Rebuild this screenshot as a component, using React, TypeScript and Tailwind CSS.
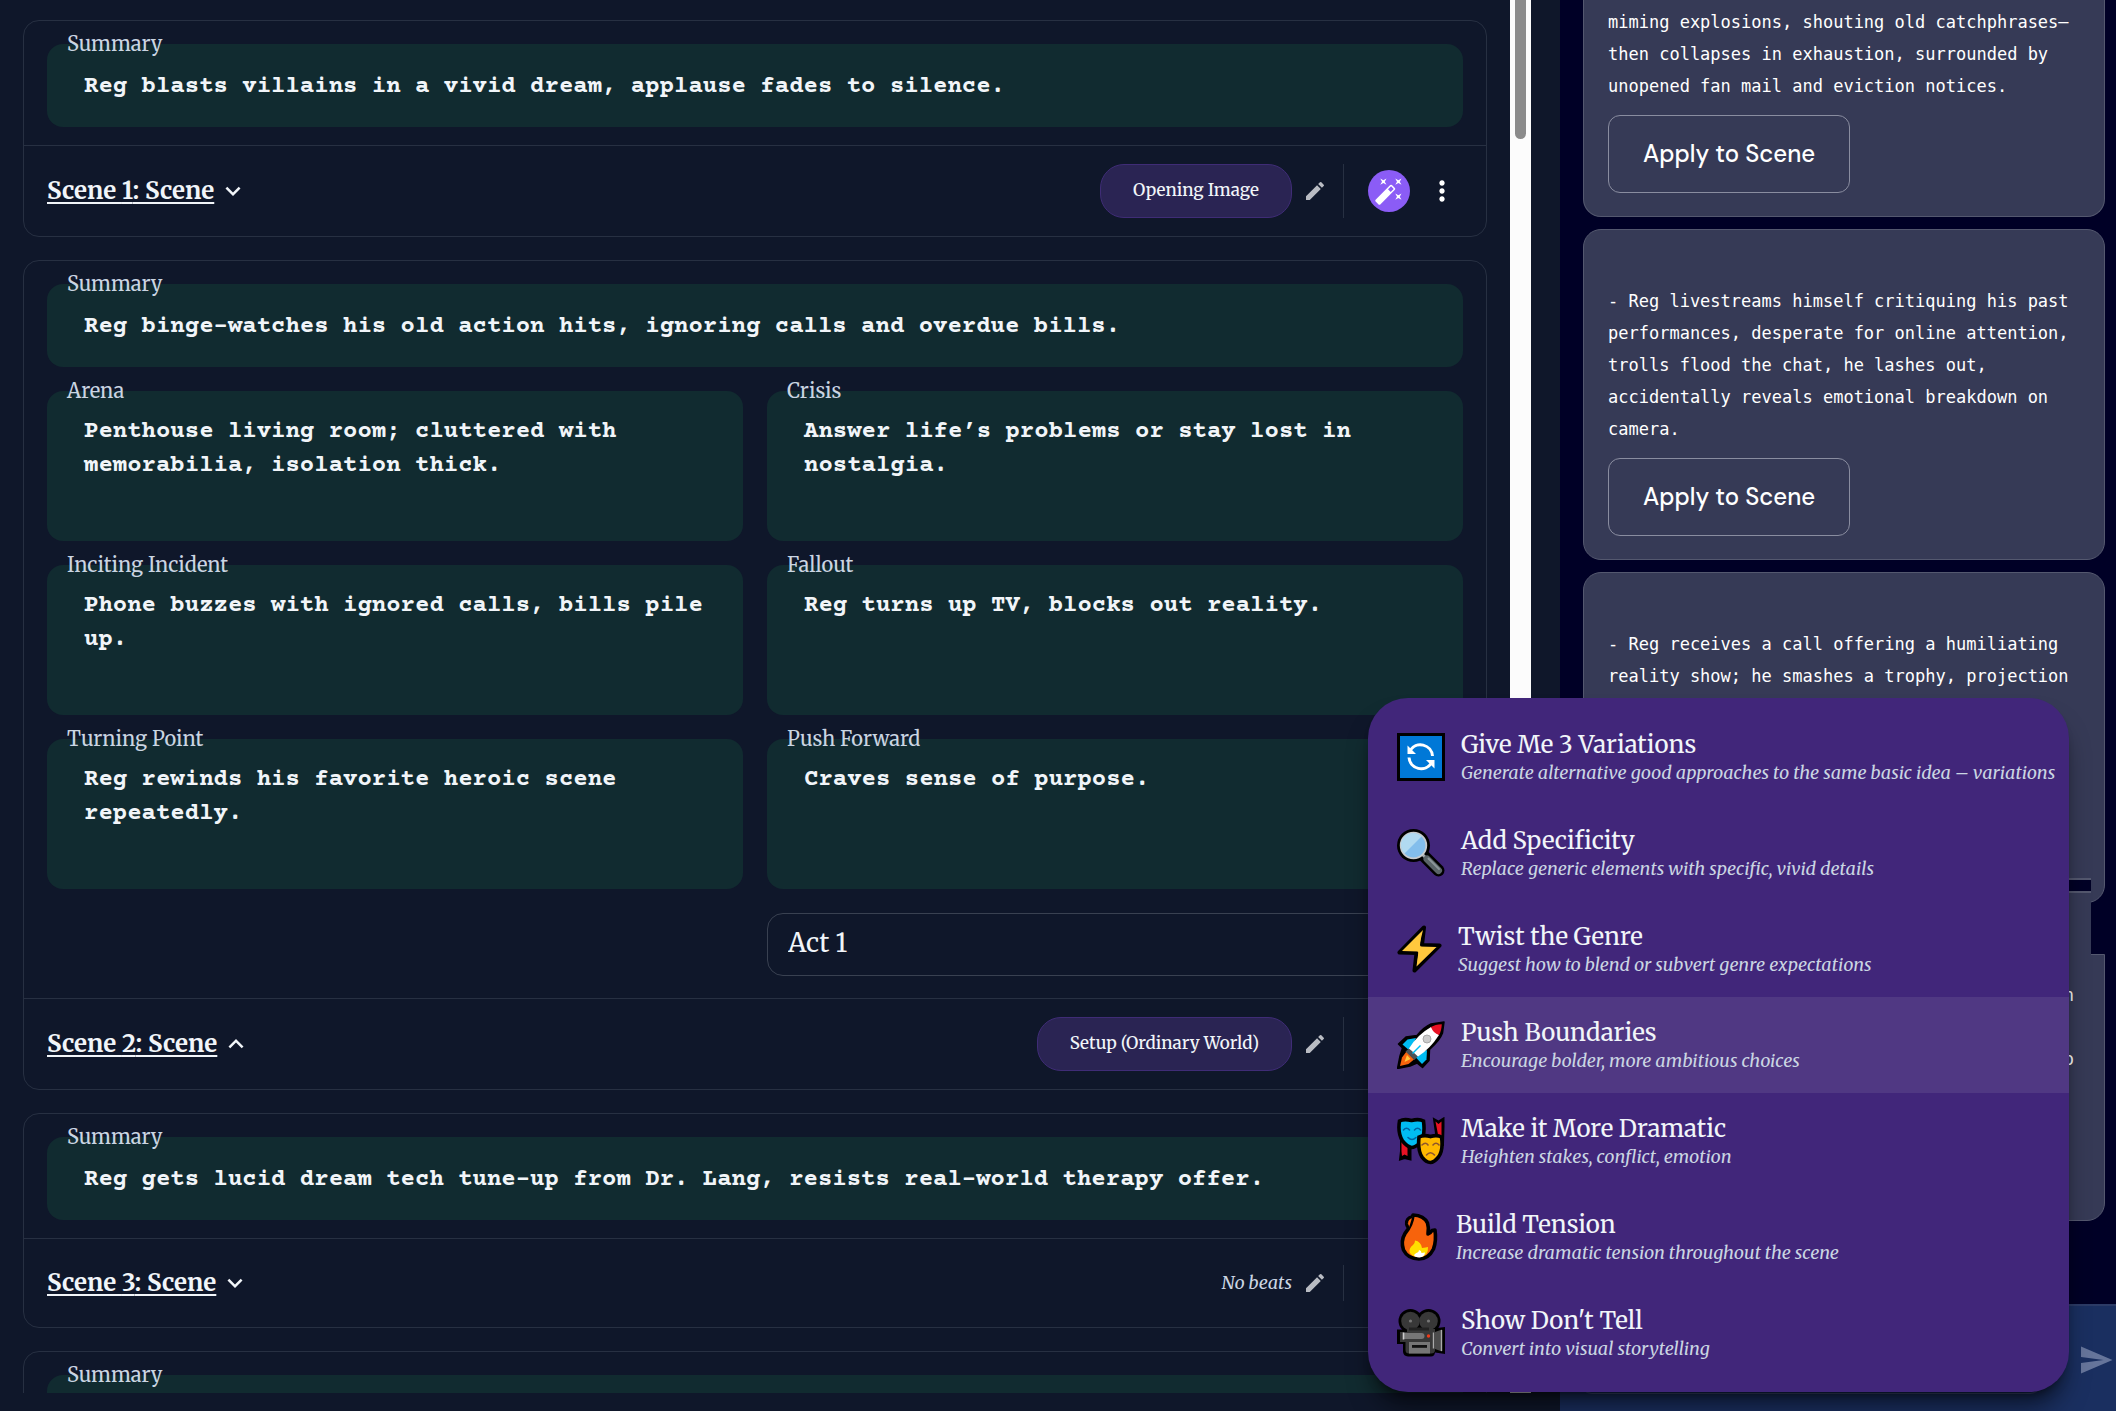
import type { ReactNode } from "react";
import { MdAutoFixHigh, MdEdit, MdExpandLess, MdExpandMore, MdMoreVert, MdSend } from "react-icons/md";

type Field = { label: string; value: string };

type Scene = {
  id: number;
  summary: string;
  beat?: string;
  open?: boolean;
  fields?: Field[];
};

const scenes: Scene[] = [
  {
    id: 1,
    summary: "Reg blasts villains in a vivid dream, applause fades to silence.",
    beat: "Opening Image",
  },
  {
    id: 2,
    summary: "Reg binge-watches his old action hits, ignoring calls and overdue bills.",
    beat: "Setup (Ordinary World)",
    open: true,
    fields: [
      { label: "Arena", value: "Penthouse living room; cluttered with memorabilia, isolation thick." },
      { label: "Crisis", value: "Answer life’s problems or stay lost in nostalgia." },
      { label: "Inciting Incident", value: "Phone buzzes with ignored calls, bills pile up." },
      { label: "Fallout", value: "Reg turns up TV, blocks out reality." },
      { label: "Turning Point", value: "Reg rewinds his favorite heroic scene repeatedly." },
      { label: "Push Forward", value: "Craves sense of purpose." },
    ],
  },
  {
    id: 3,
    summary: "Reg gets lucid dream tech tune-up from Dr. Lang, resists real-world therapy offer.",
  },
];

function RefreshEmoji() {
  return (
    <svg className="h-12 w-12 shrink-0" viewBox="0 0 48 48">
      <rect width="48" height="48" fill="#000" />
      <rect x="3" y="3" width="42" height="42" fill="#0078d7" />
      <g fill="none" stroke="#fff" strokeWidth="3">
        <path d="M13 17.5A12.2 12.2 0 0 1 35.5 23" />
        <path d="M12 24.5A12.2 12.2 0 0 0 34.5 30" />
      </g>
      <path d="M10.5 12.5v8.5h8.5z" fill="#fff" />
      <path d="M37.5 35.5v-8.5h-8.5z" fill="#fff" />
    </svg>
  );
}

function LensEmoji() {
  return (
    <svg className="h-12 w-12 shrink-0" viewBox="0 0 48 48">
      <path d="M25 25L41.5 41.5" stroke="#000" strokeWidth="12" strokeLinecap="round" />
      <circle cx="16.5" cy="16.5" r="16.5" fill="#000" />
      <path d="M25.5 25.5L30 30" stroke="#a6adb1" strokeWidth="3" />
      <path d="M30 30L41.5 41.5" stroke="#5a6468" strokeWidth="7" strokeLinecap="round" />
      <path d="M31.5 29.5L42 40" stroke="#8b9599" strokeWidth="2" strokeLinecap="round" />
      <circle cx="16.5" cy="16.5" r="12.8" fill="#83beec" stroke="#c8ccce" strokeWidth="1.8" />
      <path d="M7.5 24.5A12 12 0 0 1 24.5 7.5z" fill="#b1daf1" />
    </svg>
  );
}

function BoltEmoji() {
  return (
    <svg className="h-12 w-[45px] shrink-0" viewBox="0 0 45 48">
      <path
        d="M27 2.5L2.5 27.5L19.5 28L17.5 45.5L42.5 20.5L25 20z"
        fill="#ffc83d"
        stroke="#000"
        strokeWidth="4"
        strokeLinejoin="round"
      />
      <path d="M26 5L5 26L21.5 26.5L19.5 41.5L39.5 22L22 21.5z" fill="#ffc83d" />
    </svg>
  );
}

function RocketEmoji() {
  return (
    <svg className="h-12 w-12 shrink-0" viewBox="0 0 48 48">
      <path
        d="M47 1L34 3Q27 6 20 14.5L9 16L1.5 23L5.5 27L3 35L0.5 47.5L13 45L20 42L25.5 46.5L32 39.5L32.5 28.5Q43 19 45.5 12z"
        fill="#000"
        stroke="#000"
        strokeWidth="1.5"
        strokeLinejoin="round"
      />
      <path d="M19 17L10.5 18.5L5.5 23.5L13 30z" fill="#00bcf2" />
      <path d="M30 29L29.5 38.5L25 43L17.5 35z" fill="#00bcf2" />
      <path d="M9.5 30.5L5 36.5L3 45L11.5 43L17 38.5z" fill="#f7630c" />
      <path d="M10 34L7.5 41L13.5 38z" fill="#ffc83d" />
      <path d="M12 27.5L8.5 30.5L17.5 39L21 35z" fill="#4a5257" />
      <path d="M12 27.5Q20 14 34 6L42 14Q33 28 21 35.5z" fill="#fff" />
      <path d="M34 6Q38 3.5 44.8 3.2Q44.5 10 42 14Q36 12 34 6z" fill="#e81224" />
      <circle cx="30" cy="18" r="4" fill="#ccc" stroke="#a8a8a8" strokeWidth="1" />
      <path d="M15.5 32.5L23.5 24.5" stroke="#00bcf2" strokeWidth="1.5" />
    </svg>
  );
}

function MasksEmoji() {
  return (
    <svg className="h-12 w-12 shrink-0" viewBox="0 0 48 48">
      <path
        d="M37 2l4.5 2.5 5-3v8l-.5 18-6-4zM4 18v16l-1 8.5 4.500-1.500 6 1.500V28z"
        fill="#000"
        stroke="#000"
        strokeWidth="2"
      />
      <path d="M38.5 4.5l3 2.500 3-2.500v15l-3.500-2zM4.500 22v12.500l.5 4.500 2.500-1.500 3 1.500V28z" fill="#e81224" />
      <path
        d="M2.5 4Q7 1.500 14.500 3.500Q22 1.500 26.500 4Q28.500 19 23 26Q18 30.500 14.500 30.500Q10.500 30 5.500 24Q0.500 16 2.500 4z"
        fill="#00bcf2"
        stroke="#000"
        strokeWidth="3.6"
      />
      <path
        d="M22 20Q27 17.500 33.500 19.500Q40 17.500 44.500 20Q46.500 33 41.500 40Q37 45.500 33.500 45.500Q29 45.500 25 40Q20.500 33 22 20z"
        fill="#ffb900"
        stroke="#000"
        strokeWidth="3.6"
      />
      <g fill="none" stroke="#0063a3" strokeWidth="1.6" strokeLinecap="round">
        <path d="M6.500 13Q9.500 9.500 12.500 13" />
        <path d="M17.500 13Q20.500 9.500 23.500 13" />
        <path d="M11 20.500Q15 24.500 19 20.500" />
      </g>
      <g fill="none" stroke="#8e562e" strokeWidth="1.6" strokeLinecap="round">
        <path d="M25 28Q28.500 24.500 31 28" />
        <path d="M36 28Q39 24.500 42 28" />
        <path d="M29.500 38Q33.500 33.500 37.500 38" />
      </g>
    </svg>
  );
}

function FireEmoji() {
  return (
    <svg className="h-12 w-[43px] shrink-0" viewBox="0 0 43 48">
      <path
        d="M16 2Q27 2.500 30.500 10Q32 14.500 31 21Q34 19.500 35 17.500L38 17Q39.500 28 36.500 36Q31.500 46 22 46Q11 46 6.500 37Q3.500 28 8 20.500Q15 12 16 2z"
        fill="#f7630c"
        stroke="#000"
        strokeWidth="3.6"
        strokeLinejoin="round"
      />
      <path d="M15.500 3.500Q9 5 9.500 11Q10 14 12 14.500" fill="#f7630c" stroke="#000" strokeWidth="3.2" />
      <path
        d="M18 27.500Q24 28.500 25 35Q29 34.500 31 34Q31.500 42 24 44Q14.500 44.500 12.500 39Q12 35 16 32Q18 30.500 18 27.500z"
        fill="#ffde00"
      />
      <path
        d="M22 37Q24.500 37.500 24.500 40L28 39.500Q27.500 44 22.500 44.500Q17.500 44 17 42Q19 39.500 20.500 39.500Q22 38.500 22 37z"
        fill="#fff"
      />
    </svg>
  );
}

function CameraEmoji() {
  return (
    <svg className="h-12 w-12 shrink-0" viewBox="0 0 48 48">
      <circle cx="13.500" cy="12" r="12" fill="#000" />
      <circle cx="31.500" cy="12" r="12" fill="#000" />
      <path d="M0 20.500L4 20.500L40 19L48 18V45L38 43.500Q37.500 47.500 34 47.500H11Q6.500 47 6 43V35H0z" fill="#000" />
      <circle cx="13.500" cy="12" r="9.300" fill="#383838" />
      <circle cx="31.500" cy="12" r="9.300" fill="#383838" />
      <path d="M10 20H38V41Q38 44.500 34 44.500H12Q8.500 44.500 8.500 41V33H3V23H10z" fill="#383838" />
      <rect x="12" y="18.500" width="20" height="3" fill="#222" />
      <circle cx="13.500" cy="12" r="1.600" fill="#767676" />
      <circle cx="31.500" cy="12" r="1.600" fill="#767676" />
      <path d="M6 24H24.500a3 3 0 0 1 0 6H6z" fill="#767676" />
      <path d="M6.500 23.500V30.500" stroke="#ccc" strokeWidth="1.6" />
      <circle cx="31.500" cy="27" r="1.700" fill="#f03a17" />
      <rect x="12" y="33" width="21" height="11.500" fill="#767676" />
      <rect x="15" y="36" width="15" height="2.800" fill="#111" />
      <path d="M38 23L45 20.500V42.500L38 40z" fill="#4c4c4c" />
      <path d="M36.500 23.500V39.500M44.500 21V42" stroke="#aaa" strokeWidth="1.4" />
    </svg>
  );
}

const actions: { title: string; text: string; icon: ReactNode; active?: boolean }[] = [
  {
    title: "Give Me 3 Variations",
    text: "Generate alternative good approaches to the same basic idea – variations",
    icon: <RefreshEmoji />,
  },
  { title: "Add Specificity", text: "Replace generic elements with specific, vivid details", icon: <LensEmoji /> },
  { title: "Twist the Genre", text: "Suggest how to blend or subvert genre expectations", icon: <BoltEmoji /> },
  { title: "Push Boundaries", text: "Encourage bolder, more ambitious choices", icon: <RocketEmoji />, active: true },
  { title: "Make it More Dramatic", text: "Heighten stakes, conflict, emotion", icon: <MasksEmoji /> },
  { title: "Build Tension", text: "Increase dramatic tension throughout the scene", icon: <FireEmoji /> },
  { title: "Show Don't Tell", text: "Convert into visual storytelling", icon: <CameraEmoji /> },
];

function SceneField({ id, label, value, tall }: Field & { id: string; tall?: boolean }) {
  return (
    <div className="relative">
      <label className="absolute -top-3 left-5 text-xl leading-6 text-slate-300" htmlFor={id}>
        {label}
      </label>
      <textarea
        className={`block w-full resize-none overflow-hidden rounded-2xl bg-[#112b30] pr-8 pl-[37px] font-['Courier_Prime','FreeMono','Liberation_Mono',monospace] text-2xl leading-[34px] font-bold text-slate-100 outline-none ${
          tall ? "h-[150px] pt-6" : "h-[83px] pt-[26px]"
        }`}
        defaultValue={value}
        id={id}
      />
    </div>
  );
}

function SceneCard({ scene }: { scene: Scene }) {
  return (
    <section className="shrink-0 rounded-2xl border border-[#273042]">
      <div className={`px-[23px] pt-[23px] ${scene.fields ? "pb-[22px]" : "pb-[18px]"}`}>
        <SceneField id={`summary-${scene.id}`} label="Summary" value={scene.summary} />
        {scene.fields && (
          <div className="mt-6 grid grid-cols-2 gap-6">
            {scene.fields.map((field) => (
              <SceneField key={field.label} id={`${field.label}-${scene.id}`} tall {...field} />
            ))}
            <select
              aria-label="Act"
              className="col-start-2 h-[63px] appearance-none rounded-2xl border border-[#394151] bg-transparent px-5 pb-1 text-[26px] text-slate-100"
            >
              <option>Act 1</option>
            </select>
          </div>
        )}
      </div>
      <div className="flex min-h-[89px] items-center border-t border-[#273042] py-[18px] pr-7 pl-[23px]">
        <button className="flex items-center gap-1 text-slate-100" type="button">
          <span className="text-2xl leading-7 font-bold underline decoration-2 underline-offset-3">
            Scene {scene.id}: Scene
          </span>
          {scene.open ? <MdExpandLess size={30} /> : <MdExpandMore size={30} />}
        </button>
        <div className="ml-auto flex items-center">
          {scene.beat ? (
            <button
              className="h-[54px] rounded-3xl border border-[#3f2c76] bg-[#2a2453] px-8 text-[17px] font-medium text-slate-100"
              type="button"
            >
              {scene.beat}
            </button>
          ) : (
            <span className="text-lg text-slate-300 italic">No beats</span>
          )}
          <button aria-label="Edit beats" className="ml-[11px] text-[#b9bcc3]" type="button">
            <MdEdit size={24} />
          </button>
          <span className={`ml-4 border-l border-[#273042] ${scene.beat ? "h-[54px]" : "h-9"}`} />
          <button
            aria-label="Improve scene"
            className="ml-6 flex h-[42px] w-[42px] items-center justify-center rounded-full bg-[#8b5cf6] text-white"
            type="button"
          >
            <MdAutoFixHigh size={30} />
          </button>
          <button aria-label="More" className="ml-4 text-white" type="button">
            <MdMoreVert size={32} />
          </button>
        </div>
      </div>
    </section>
  );
}

function ApplyButton() {
  return (
    <button
      className="mt-[13px] block h-[78px] rounded-xl border border-[#8a8da0] px-[34px] font-['DM_Sans','Inter',sans-serif] text-2xl font-medium text-white"
      type="button"
    >
      Apply to Scene
    </button>
  );
}

const cardStyle = "border-[#54586f] bg-[#363a56] px-6 pb-[23px]";

export default function App() {
  return (
    <div className="relative flex h-screen overflow-hidden bg-[#0f172a] font-['Merriweather','Noto_Serif','DejaVu_Serif_Condensed',serif]">
      <main className="flex min-w-0 flex-1 pr-[29px] pb-[18px]">
        <div className="flex flex-1 flex-col gap-[23px] overflow-hidden px-[23px] pt-5">
          {scenes.map((scene) => (
            <SceneCard key={scene.id} scene={scene} />
          ))}
          <section className="shrink-0 rounded-2xl border border-[#273042] px-[23px] pt-[23px] pb-[18px]">
            <SceneField id="summary-4" label="Summary" value="" />
          </section>
        </div>
        <div className="w-[21px] bg-[#fcfcfc] px-[5px]">
          <div className="h-[139px] rounded-b-full bg-[#8b8b8b]" />
        </div>
      </main>

      <aside className="relative flex w-[556px] flex-col bg-[#000026]">
        <div className="flex-1 overflow-hidden pr-[11px] pl-[23px] font-['Consolas','DejaVu_Sans_Mono',monospace] text-[17px] leading-8 text-white">
          <article className={`${cardStyle} rounded-b-[18px] border-x border-b pt-1.5`}>
            <p>
              miming explosions, shouting old catchphrases—
              <br />
              then collapses in exhaustion, surrounded by
              <br />
              unopened fan mail and eviction notices.
            </p>
            <ApplyButton />
          </article>
          <article className={`${cardStyle} mt-3 rounded-[18px] border pt-[55px]`}>
            <p>
              - Reg livestreams himself critiquing his past
              <br />
              performances, desperate for online attention,
              <br />
              trolls flood the chat, he lashes out,
              <br />
              accidentally reveals emotional breakdown on
              <br />
              camera.
            </p>
            <ApplyButton />
          </article>
          <article className={`${cardStyle} mt-3 h-[331px] rounded-[18px] border pt-[55px]`}>
            <p>
              - Reg receives a call offering a humiliating
              <br />
              reality show; he smashes a trophy, projection
            </p>
          </article>
          <article className={`${cardStyle} mt-[51px] h-[267px] rounded-b-[18px] border pt-6`}>
            <p className="pr-1.5 text-right">
              an
              <br />
              <br />
              to
            </p>
          </article>
        </div>

        {/* next card sliding in over the previous one */}
        <div className="absolute top-[878px] right-[25px] left-[23px] border-t-2 border-[#54586f] bg-[#000026] pt-[11px]">
          <div className="h-16 border-t-2 border-[#54586f] bg-[#363a56]" />
        </div>

        <form className="flex h-[107px] items-center border-t-2 border-[#2c3b66] bg-[#1a2f60] pl-5">
          <input
            aria-label="Message"
            className="h-[70px] flex-1 rounded-xl border border-[#43547f] px-4 text-white outline-none"
            type="text"
          />
          <button aria-label="Send" className="mr-0.5 ml-9 pt-0.5 text-[#66759b]" type="button">
            <MdSend size={36} />
          </button>
        </form>
      </aside>

      <div className="absolute right-[47px] bottom-[19px] w-[701px] rounded-[40px] bg-[#41267a] py-[11px] shadow-xl shadow-black/50">
        {actions.map((action) => (
          <button
            key={action.title}
            className={`flex h-24 w-full items-center gap-4 px-[29px] text-left ${action.active ? "bg-[#503883]" : ""}`}
            type="button"
          >
            {action.icon}
            <span className="pt-1 whitespace-nowrap">
              <span className="block text-2xl leading-7 text-slate-100">{action.title}</span>
              <span className="block text-lg leading-7 text-slate-300 italic">{action.text}</span>
            </span>
          </button>
        ))}
      </div>
    </div>
  );
}
